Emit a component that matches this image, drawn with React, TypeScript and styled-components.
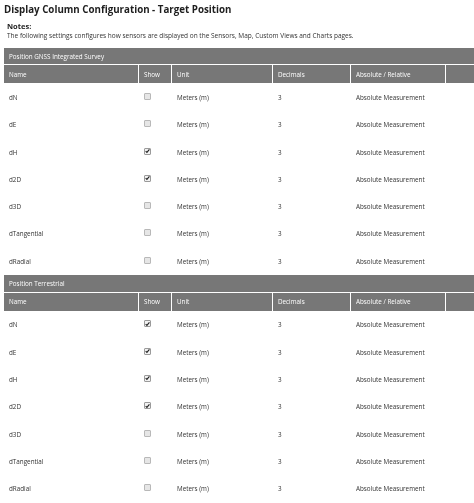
import React from "react";
import styled, { createGlobalStyle } from "styled-components";

const GlobalStyle = createGlobalStyle`
  html, body {
    margin: 0;
    padding: 0;
    background: #ffffff;
    overflow: hidden;
  }
  body {
    font-family: "Open Sans", "Noto Sans", sans-serif;
    color: #444;
  }
`;

const Page = styled.div`
  padding: 3px 0 0 4px;
  width: 470px;
  will-change: transform;
`;

const Title = styled.h1`
  margin: 0;
  font-size: 9.75px;
  line-height: 13px;
  font-weight: 700;
  color: #1e1e1e;
`;

const Notes = styled.div`
  padding-left: 3px;
  margin-top: 5px;
`;

const NotesLabel = styled.div`
  font-size: 7.5px;
  line-height: 10px;
  font-weight: 700;
  color: #1e1e1e;
`;

const NotesText = styled.div`
  font-size: 6.5px;
  line-height: 9px;
  color: #333;
  white-space: nowrap;
`;

const Table = styled.div`
  margin-top: 8px;
  display: grid;
  row-gap: 1px;
  width: 470px;
`;

const cols = "134px 32px 100px 77px 94px 1fr";

const SectionHeader = styled.div`
  height: 16.3px;
  background: #777777;
  color: #fff;
  font-size: 6.3px;
  display: flex;
  align-items: center;
  padding-left: 5px;
`;

const HeaderRow = styled.div`
  display: grid;
  grid-template-columns: ${cols};
  column-gap: 1px;
  height: 18px;
`;

const HeaderCell = styled.div`
  background: #777777;
  color: #fff;
  font-size: 6.3px;
  display: flex;
  align-items: center;
  padding-left: 5px;
`;

const Row = styled.div`
  display: grid;
  grid-template-columns: ${cols};
  column-gap: 1px;
  height: 26.3px;
`;

const Cell = styled.div`
  font-size: 6.3px;
  color: #333;
  display: flex;
  align-items: center;
  padding-left: 5px;
`;

const Box = styled.span<{ $checked: boolean }>`
  width: 5px;
  height: 5px;
  border: 1px solid ${(p) => (p.$checked ? "#9a9a9a" : "#b8b8b8")};
  background: ${(p) => (p.$checked ? "#f2f2f2" : "#e6e6e6")};
  border-radius: 1px;
  display: flex;
  align-items: center;
  justify-content: center;
  position: relative;
  top: -1px;
`;

const CheckBox = ({ checked }: { checked: boolean }) => (
  <Box $checked={checked}>
    {checked && (
      <svg width="6" height="6" viewBox="0 0 6 6">
        <path d="M0.8 3.2 L2.3 4.7 L5.3 1.0" stroke="#222" strokeWidth="1.3" fill="none" />
      </svg>
    )}
  </Box>
);

type Item = { name: string; show: boolean };

const sections: { title: string; items: Item[] }[] = [
  {
    title: "Position GNSS Integrated Survey",
    items: [
      { name: "dN", show: false },
      { name: "dE", show: false },
      { name: "dH", show: true },
      { name: "d2D", show: true },
      { name: "d3D", show: false },
      { name: "dTangential", show: false },
      { name: "dRadial", show: false },
    ],
  },
  {
    title: "Position Terrestrial",
    items: [
      { name: "dN", show: true },
      { name: "dE", show: true },
      { name: "dH", show: true },
      { name: "d2D", show: true },
      { name: "d3D", show: false },
      { name: "dTangential", show: false },
      { name: "dRadial", show: false },
    ],
  },
];

export default function App() {
  return (
    <>
      <GlobalStyle />
      <Page>
        <Title>Display Column Configuration - Target Position</Title>
        <Notes>
          <NotesLabel>Notes:</NotesLabel>
          <NotesText>
            The following settings configures how sensors are displayed on the Sensors, Map, Custom Views and Charts pages.
          </NotesText>
        </Notes>
        <Table>
          {sections.map((s) => (
            <React.Fragment key={s.title}>
              <SectionHeader>{s.title}</SectionHeader>
              <HeaderRow>
                <HeaderCell>Name</HeaderCell>
                <HeaderCell>Show</HeaderCell>
                <HeaderCell>Unit</HeaderCell>
                <HeaderCell>Decimals</HeaderCell>
                <HeaderCell>Absolute / Relative</HeaderCell>
                <HeaderCell />
              </HeaderRow>
              {s.items.map((it) => (
                <Row key={it.name}>
                  <Cell>{it.name}</Cell>
                  <Cell>
                    <CheckBox checked={it.show} />
                  </Cell>
                  <Cell>Meters (m)</Cell>
                  <Cell>3</Cell>
                  <Cell>Absolute Measurement</Cell>
                  <Cell />
                </Row>
              ))}
            </React.Fragment>
          ))}
        </Table>
      </Page>
    </>
  );
}
